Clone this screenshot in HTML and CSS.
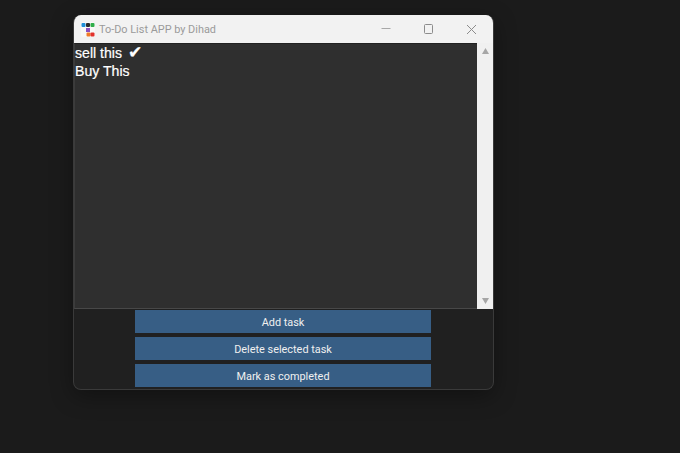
FILE: index.html
```html
<!DOCTYPE html>
<html lang="en">
<head>
<meta charset="utf-8">
<title>To-Do List APP by Dihad</title>
<link rel="stylesheet" href="styles.css">
</head>
<body>
<div class="window">
  <header class="titlebar">
    <svg class="app-icon" width="14" height="15" viewBox="0 0 14 15">
      <rect x="0" y="0" width="14" height="15" rx="2" fill="#f8f8f8"/>
      <rect x="0.500" y="1" width="4" height="4" rx="1" fill="#1f8fd8"/>
      <rect x="5" y="1" width="4" height="4" rx="1" fill="#2a2a2a"/>
      <rect x="9.500" y="1" width="4" height="4" rx="1" fill="#2fae4a"/>
      <rect x="5" y="6" width="4" height="4" fill="#8a4fc0"/>
      <rect x="5.500" y="10.500" width="4" height="4" rx="1" fill="#f07a28"/>
      <rect x="9.500" y="10.500" width="4" height="4" rx="1" fill="#e2322c"/>
    </svg>
    <span class="title">To-Do List APP by Dihad</span>
    <div class="controls">
      <svg class="ctl" width="43" height="28" viewBox="0 0 43 28"><path d="M18.500 13.500h9" stroke="#a8a8a8" stroke-width="1" fill="none"/></svg>
      <svg class="ctl" width="43" height="28" viewBox="0 0 43 28"><rect x="18.500" y="9.500" width="8" height="9" rx="1" stroke="#8c8c8c" fill="none"/></svg>
      <svg class="ctl" width="44" height="28" viewBox="0 0 44 28"><path d="M18 10l9 9M27 10l-9 9" stroke="#8c8c8c" stroke-width="1" fill="none"/></svg>
    </div>
  </header>
  <div class="content">
    <ul class="list">
      <li>sell this <span class="check">✔</span></li>
      <li>Buy This</li>
    </ul>
    <div class="scrollbar">
      <svg width="7" height="6" viewBox="0 0 7 6"><path d="M3.5 0L7 6H0z" fill="#a6a6a6"/></svg>
      <svg width="7" height="6" viewBox="0 0 7 6"><path d="M0 0h7L3.500 6z" fill="#a6a6a6"/></svg>
    </div>
  </div>
  <div class="actions">
    <button class="btn">Add task</button>
    <button class="btn">Delete selected task</button>
    <button class="btn">Mark as completed</button>
  </div>
</div>
</body>
</html>
```
FILE: styles.css
```css
* { box-sizing: border-box; }
html, body { margin: 0; height: 100%; }
body {
  background: #1b1b1b;
  padding: 15px 0 0 73px;
  overflow: hidden;
  font-family: "Liberation Sans", Arial, sans-serif;
}
.window {
  width: 421px;
  height: 375px;
  background: #202020;
  border: 1px solid #3a3a3a;
  border-top: 0;
  border-radius: 8px;
  box-shadow: 0 6px 22px rgba(0, 0, 0, 0.35);
  overflow: hidden;
  display: flex;
  flex-direction: column;
}
.titlebar {
  height: 28px;
  flex: none;
  background: #f2f2f2;
  display: flex;
  align-items: center;
  padding-left: 7px;
}
.app-icon { flex: none; margin-right: 4px; }
.title {
  font-family: Roboto, "Noto Sans", sans-serif;
  font-size: 10.9px;
  padding-top: 1px;
  color: #9a9a9a;
  white-space: nowrap;
}
.controls { margin-left: auto; display: flex; }
.ctl { display: block; }
.content {
  height: 266px;
  flex: none;
  display: flex;
}
.list {
  flex: 1;
  margin: 0;
  padding: 1px 0 0 0;
  list-style: none;
  background: #2f2f2f;
  border-top: 1px solid #222;
  border-left: 1px solid #3c3c3c;
  border-bottom: 1px solid #484848;
  color: #fff;
  font-size: 14.1px;
  line-height: 17.500px;
  -webkit-text-stroke: 0.2px #fff;
}
.check { font-size: 17px; line-height: 0; margin-left: 2px; }
.scrollbar {
  width: 16px;
  flex: none;
  background: #f0f0f0;
  display: flex;
  flex-direction: column;
  align-items: center;
  justify-content: space-between;
  padding: 5px 0 5px;
}
.scrollbar svg { display: block; }
.actions {
  display: flex;
  flex-direction: column;
  gap: 4px;
  padding: 1px 0 0 61px;
}
.btn {
  width: 296px;
  height: 23px;
  padding: 1px 0 0;
  border: 0;
  background: #375e85;
  color: #f0f0f0;
  font-family: Roboto, "Noto Sans", sans-serif;
  font-size: 10.9px;
}
```
